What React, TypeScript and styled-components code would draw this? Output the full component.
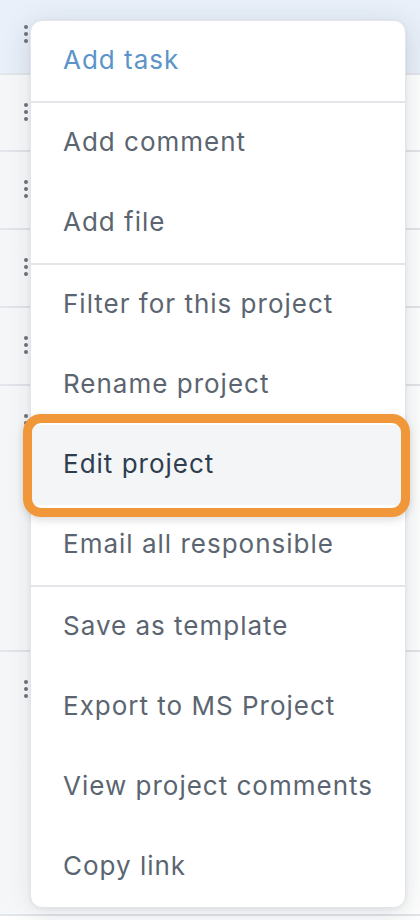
import React from "react";
import styled, { createGlobalStyle } from "styled-components";

const GlobalStyle = createGlobalStyle`
    html, body {
        margin: 0;
        padding: 0;
        background: #ffffff;
        font-family: Inter, "Open Sans", "Liberation Sans", sans-serif;
        -webkit-font-smoothing: antialiased;
    }
`

type MenuEntry = { label: string; kind?: "primary" | "active" } | "divider"

const entries: MenuEntry[] = [
    { label: "Add task", kind: "primary" },
    "divider",
    { label: "Add comment" },
    { label: "Add file" },
    "divider",
    { label: "Filter for this project" },
    { label: "Rename project" },
    { label: "Edit project", kind: "active" },
    { label: "Email all responsible" },
    "divider",
    { label: "Save as template" },
    { label: "Export to MS Project" },
    { label: "View project comments" },
    { label: "Copy link" },
]

// row heights include the 2px bottom border
const rows = [
    { height: 75, header: true },
    { height: 77 },
    { height: 78 },
    { height: 78 },
    { height: 78 },
    { height: 266 },
    { height: 264 },
]

const Handle = () => (
    <HandleIcon width="8" height="20" viewBox="0 0 8 20">
        <circle cx="4" cy="3" r="2" />
        <circle cx="4" cy="10" r="2" />
        <circle cx="4" cy="17" r="2" />
    </HandleIcon>
)

export default function App() {
    return (
        <>
            <GlobalStyle />
            <Page>
                <Table>
                    {rows.map((r, i) => (
                        <Row key={i} $height={r.height} $header={!!r.header}>
                            <Handle />
                        </Row>
                    ))}
                </Table>
                <Menu>
                    {entries.map((e, i) =>
                        e === "divider" ? (
                            <Divider key={i} />
                        ) : (
                            <Item key={i} $kind={e.kind}>
                                {e.label}
                            </Item>
                        )
                    )}
                </Menu>
            </Page>
        </>
    )
}

const Page = styled.div`
    position: relative;
    width: 420px;
    height: 920px;
    overflow: hidden;
    background: #ffffff;
`

const Table = styled.div`
    display: flex;
    flex-direction: column;
    background: linear-gradient(90deg, #f5f6f8 0px, #fafbfc 24px, #ffffff 60px);
`

const Row = styled.div<{ $height: number; $header: boolean }>`
    height: ${p => p.$height}px;
    box-sizing: border-box;
    padding: ${p => (p.$header ? 24 : 27)}px 0 0 22px;
    border-bottom: 2px solid #e3e6ea;
    background: ${p => (p.$header ? "#e9f0f9" : "transparent")};
`

const HandleIcon = styled.svg`
    display: block;
    fill: #6d737c;
`

const Menu = styled.div`
    position: absolute;
    top: 20px;
    left: 30px;
    width: 376px;
    box-sizing: border-box;
    background: #ffffff;
    border: 1px solid #e2e5e9;
    border-radius: 12px;
    box-shadow: 0 6px 30px rgba(30, 40, 60, 0.15), 0 1px 4px rgba(30, 40, 60, 0.06);
    display: flex;
    flex-direction: column;
`

const Divider = styled.div`
    height: 2px;
    background: #e3e5e8;
`

const Item = styled.div<{ $kind?: "primary" | "active" }>`
    position: relative;
    height: 80px;
    box-sizing: border-box;
    display: flex;
    align-items: center;
    padding: 0 0 3px 32px;
    font-size: 26px;
    letter-spacing: 1px;
    color: ${p => (p.$kind === "primary" ? "#5b94c8" : p.$kind === "active" ? "#2f3d4f" : "#5b6571")};
    background: ${p => (p.$kind === "active" ? "#f3f5f7" : "transparent")};

    ${p =>
        p.$kind === "active" &&
        `
        &::after {
            content: "";
            position: absolute;
            top: -11px;
            bottom: -12px;
            left: -8px;
            right: -5px;
            border: 9px solid #f0973a;
            border-radius: 18px;
            box-shadow: 0 3px 8px rgba(0, 0, 0, 0.14);
            pointer-events: none;
        }
    `}
`
